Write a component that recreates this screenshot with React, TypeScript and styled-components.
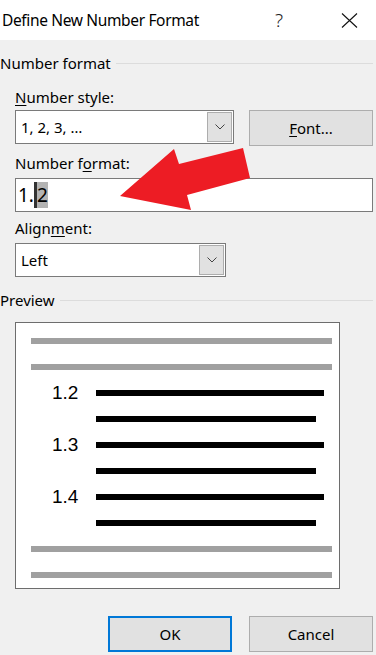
import React from "react"
import styled, { createGlobalStyle } from "styled-components"

const GlobalStyle = createGlobalStyle`
  body {
    margin: 0;
    background: #f0f0f0;
    font-family: "Segoe UI", "Noto Sans", "Liberation Sans", sans-serif;
    color: #000;
  }
`

const Dialog = styled.div`
  position: relative;
  width: 376px;
  height: 655px;
  overflow: hidden;
  background: #f0f0f0;
`

const TitleBar = styled.div`
  display: flex;
  align-items: center;
  height: 40px;
  background: #fff;
  padding-left: 2px;
`

const Title = styled.div`
  flex: 1;
  font-size: 15.5px;
  letter-spacing: -0.35px;
  white-space: nowrap;
`

const HelpGlyph = styled.div`
  width: 66px;
  font-size: 19px;
  font-weight: 300;
  color: #222;
`

const CloseBox = styled.div`
  width: 35px;
  display: flex;
  align-items: center;
`

const Body = styled.div`
  padding: 13px 3px 0 0;
`

const GroupHeader = styled.div`
  display: flex;
  align-items: center;
  height: 20px;
  font-size: 15px;
  margin-top: ${(p: { $top: number }) => p.$top}px;
`

const GroupRule = styled.div`
  flex: 1;
  height: 1px;
  background: #dcdcdc;
  margin-left: 5px;
`

const Label = styled.div<{ $top: number }>`
  margin: ${(p) => p.$top}px 0 0 15px;
  font-size: 15px;
  height: 20px;
  line-height: 20px;
`

const Key = styled.span`
  text-decoration: underline;
  text-underline-offset: 2px;
`

const Row = styled.div<{ $top: number }>`
  display: flex;
  align-items: flex-start;
  justify-content: space-between;
  margin: ${(p) => p.$top}px 0 0 15px;
`

const Select = styled.div<{ $w: number }>`
  box-sizing: border-box;
  display: flex;
  align-items: center;
  width: ${(p) => p.$w}px;
  height: 34px;
  background: #fff;
  border: 1px solid #7a7a7a;
  padding: 1px 1px 1px 5px;
`

const SelectValue = styled.div`
  flex: 1;
  font-size: 15px;
`

const DropButton = styled.div`
  box-sizing: border-box;
  width: 25px;
  height: 30px;
  background: #e1e1e1;
  border: 1px solid #adadad;
  display: flex;
  align-items: center;
  justify-content: center;
`

const Button = styled.div<{ $primary?: boolean }>`
  box-sizing: border-box;
  width: 124px;
  height: 36px;
  display: flex;
  align-items: center;
  justify-content: center;
  font-size: 15px;
  background: #e1e1e1;
  border: ${(p) => (p.$primary ? "2px solid #0078d7" : "1px solid #adadad")};
`

const TextInput = styled.div`
  box-sizing: border-box;
  width: 358px;
  height: 34px;
  margin: 5px 0 0 15px;
  background: #fff;
  border: 1px solid #7a7a7a;
  display: flex;
  align-items: center;
  padding-left: 2px;
  font-size: 19px;
`

const Selected = styled.span`
  background: #b3b3b3;
  border-left: 3px solid #333;
`

const PreviewBox = styled.div`
  box-sizing: border-box;
  width: 325px;
  height: 267px;
  margin: 12px 0 0 15px;
  background: #fff;
  border: 1px solid #6d6d6d;
  padding-top: 5px;
`

const PreviewRow = styled.div`
  display: flex;
  align-items: center;
  height: 26px;
`

const GreyRule = styled.div`
  width: 301px;
  height: 6px;
  margin-left: 15px;
  background: #a0a0a0;
`

const Number = styled.div`
  width: 44px;
  padding-left: 36px;
  font-family: "Liberation Sans", Arial, sans-serif;
  font-size: 19px;
  line-height: 26px;
`

const Bar = styled.div<{ $w: number }>`
  width: ${(p) => p.$w}px;
  height: 6px;
  background: #000;
`

const Footer = styled.div`
  display: flex;
  justify-content: flex-end;
  gap: 17px;
  margin-top: 27px;
`

const Overlay = styled.svg`
  position: absolute;
  left: 0;
  top: 0;
  pointer-events: none;
`

const Chevron = () => (
  <svg width="10" height="6" viewBox="0 0 10 6">
    <path d="M0.5 0.5 L5 5 L9.5 0.5" fill="none" stroke="#444" strokeWidth="1" />
  </svg>
)

const items = ["1.2", "1.3", "1.4"]

export default function App() {
  return (
    <Dialog>
      <GlobalStyle />
      <TitleBar>
        <Title>Define New Number Format</Title>
        <HelpGlyph>?</HelpGlyph>
        <CloseBox>
          <svg width="17" height="15" viewBox="0 0 17 15">
            <path d="M1 0.5 L16 14.5 M16 0.5 L1 14.5" stroke="#111" strokeWidth="1.1" fill="none" />
          </svg>
        </CloseBox>
      </TitleBar>
      <Body>
        <GroupHeader $top={0}>
          Number format
          <GroupRule />
        </GroupHeader>
        <Label $top={14}>
          <Key>N</Key>umber style:
        </Label>
        <Row $top={3}>
          <Select $w={219}>
            <SelectValue>1, 2, 3, …</SelectValue>
            <DropButton>
              <Chevron />
            </DropButton>
          </Select>
          <Button>
            <span>
              <Key>F</Key>ont...
            </span>
          </Button>
        </Row>
        <Label $top={7}>
          Number f<Key>o</Key>rmat:
        </Label>
        <TextInput>
          1.<Selected>2</Selected>
        </TextInput>
        <Label $top={6}>
          Align<Key>m</Key>ent:
        </Label>
        <Row $top={5}>
          <Select $w={211}>
            <SelectValue>Left</SelectValue>
            <DropButton>
              <Chevron />
            </DropButton>
          </Select>
        </Row>
        <GroupHeader $top={13}>
          Preview
          <GroupRule />
        </GroupHeader>
        <PreviewBox>
          <PreviewRow>
            <GreyRule />
          </PreviewRow>
          <PreviewRow>
            <GreyRule />
          </PreviewRow>
          {items.map((n) => (
            <React.Fragment key={n}>
              <PreviewRow>
                <Number>{n}</Number>
                <Bar $w={228} />
              </PreviewRow>
              <PreviewRow>
                <Number />
                <Bar $w={220} />
              </PreviewRow>
            </React.Fragment>
          ))}
          <PreviewRow>
            <GreyRule />
          </PreviewRow>
          <PreviewRow>
            <GreyRule />
          </PreviewRow>
        </PreviewBox>
        <Footer>
          <Button $primary>OK</Button>
          <Button>Cancel</Button>
        </Footer>
      </Body>
      <Overlay width="376" height="655" viewBox="0 0 376 655">
        <polygon
          points="120,196 174,149 179,164 243,148 250,178 187,195 191,210"
          fill="#ed1c24"
        />
      </Overlay>
    </Dialog>
  )
}
